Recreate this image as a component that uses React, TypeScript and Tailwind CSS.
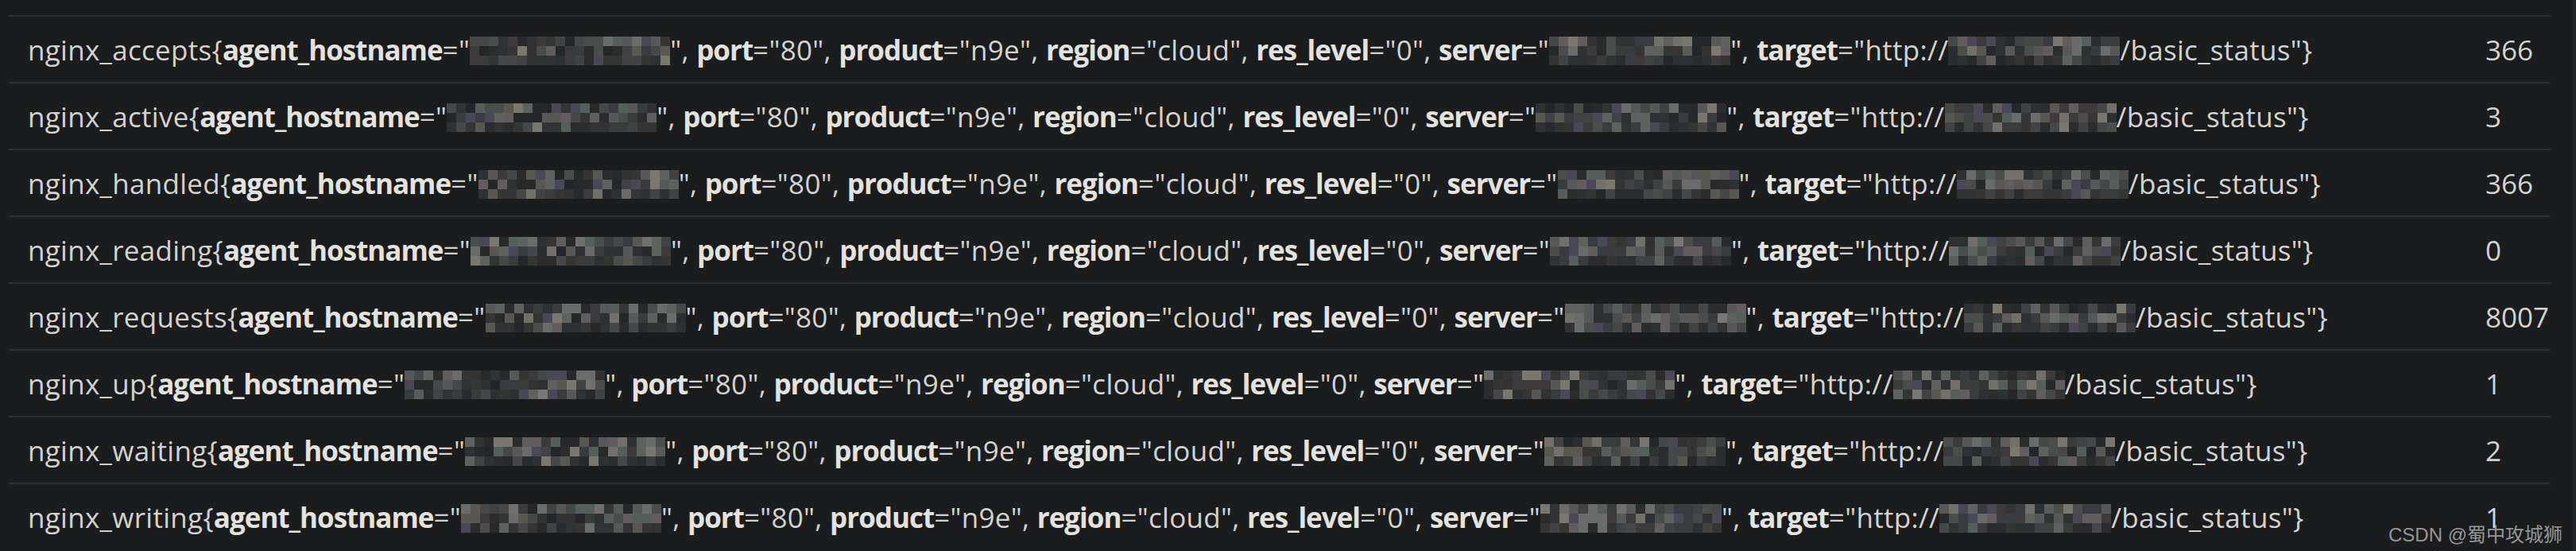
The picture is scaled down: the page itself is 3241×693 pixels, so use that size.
import React from "react";

type Row = { name: string; value: string; host: number; server: number; target: number };

const rows: Row[] = [
  { name: "nginx_accepts", value: "366", host: 21, server: 19, target: 18 },
  { name: "nginx_active", value: "3", host: 22, server: 20, target: 18 },
  { name: "nginx_handled", value: "366", host: 21, server: 19, target: 18 },
  { name: "nginx_reading", value: "0", host: 21, server: 19, target: 18 },
  { name: "nginx_requests", value: "8007", host: 21, server: 19, target: 18 },
  { name: "nginx_up", value: "1", host: 21, server: 20, target: 18 },
  { name: "nginx_waiting", value: "2", host: 21, server: 19, target: 18 },
  { name: "nginx_writing", value: "1", host: 21, server: 19, target: 18 },
];

const palette = [
  "#2a2c2e", "#303234", "#353634", "#3a3b3c", "#404243", "#464749", "#2e3133",
  "#4b4d4b", "#56585a", "#5e625f", "#6a6c6c", "#727068", "#7b776e", "#545e5a",
  "#4a4858", "#3e3a3c", "#24272a", "#27292b", "#5a5650", "#625c5e", "#383c40",
];

function rng(seed: number) {
  let s = seed >>> 0;
  return () => {
    s = (s * 1664525 + 1013904223) >>> 0;
    return s / 4294967296;
  };
}

function Mosaic({ cols, seed }: { cols: number; seed: number }) {
  const r = rng(seed);
  const cells: string[] = [];
  for (let i = 0; i < cols * 3; i++) {
    const row = Math.floor(i / cols);
    let idx = Math.floor(r() * palette.length);
    if (row === 2 && r() < 0.6) idx = Math.floor(r() * 7);
    cells.push(palette[idx]);
  }
  return (
    <span
      className="inline-grid align-middle translate-y-[-2px]"
      style={{ gridTemplateColumns: `repeat(${cols}, 12px)`, gridTemplateRows: "repeat(3, 12px)" }}
    >
      {cells.map((c, i) => (
        <span key={i} style={{ backgroundColor: c }} />
      ))}
    </span>
  );
}

function B({ children }: { children: React.ReactNode }) {
  return <span className="font-bold tracking-[-1px] text-[#e4e2de]">{children}</span>;
}

function Line({ row, i }: { row: Row; i: number }) {
  return (
    <span className="whitespace-nowrap tracking-[0.3px]">
      {row.name}
      {"{"}
      <B>agent_hostname</B>="
      <Mosaic cols={row.host} seed={i * 97 + 11} />
      ", <B>port</B>="80", <B>product</B>="n9e", <B>region</B>="cloud", <B>res_level</B>="0",{" "}
      <B>server</B>="
      <Mosaic cols={row.server} seed={i * 131 + 7} />
      ", <B>target</B>="http://
      <Mosaic cols={row.target} seed={i * 53 + 29} />
      /basic_status"{"}"}
    </span>
  );
}

export default function App() {
  return (
    <div
      className="relative w-[3241px] h-[693px] overflow-hidden bg-[#1b1c1e] text-[#d4d2ce] text-[35px] leading-[1.4] pt-[19px] pl-[11px] pr-[32px]"
      style={{ fontFamily: '"Open Sans", "Noto Sans", sans-serif' }}
    >
      <div className="flex flex-col">
        {rows.map((row, i) => (
          <div
            key={row.name}
            className="grid grid-cols-[1fr_106px] h-[84px] border-t-2 border-[#2c2f31] items-center"
          >
            <div className="pl-[24px]">
              <Line row={row} i={i} />
            </div>
            <div className="pl-[24px]">{row.value}</div>
          </div>
        ))}
      </div>
      <div className="absolute right-0 top-0 h-full w-[4px] bg-[#222426]" />
      <div
        className="absolute right-[17px] bottom-[8px] text-[24px] leading-none text-[#b8b8b8]/80"
        style={{ fontFamily: '"Liberation Sans", "Noto Sans CJK SC", sans-serif' }}
      >
        CSDN @蜀中攻城狮
      </div>
    </div>
  );
}
